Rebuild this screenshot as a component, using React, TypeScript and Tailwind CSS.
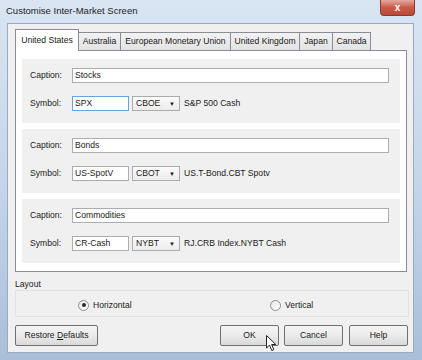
import type React from 'react';

const tabs = [
  { label: 'United States', w: 'w-[64px]' },
  { label: 'Australia', w: 'w-[42px]' },
  { label: 'European Monetary Union', w: 'w-[110px]' },
  { label: 'United Kingdom', w: 'w-[69px]' },
  { label: 'Japan', w: 'w-[33px]' },
  { label: 'Canada', w: 'w-[38px]' },
];

const groups = [
  { caption: 'Stocks', symbol: 'SPX', exchange: 'CBOE', desc: 'S&P 500 Cash', focused: true },
  { caption: 'Bonds', symbol: 'US-SpotV', exchange: 'CBOT', desc: 'US.T-Bond.CBT Spotv', focused: false },
  { caption: 'Commodities', symbol: 'CR-Cash', exchange: 'NYBT', desc: 'RJ.CRB Index.NYBT Cash', focused: false },
];

export default function App() {
  return (
    <div
      className="relative flex h-[360px] w-[422px] flex-col overflow-hidden bg-gradient-to-b from-[#d9e5f3] via-[#c5d6ea] to-[#a9bfd9] text-[8.6px] text-[#1a1a1a]"
      style={{ fontFamily: '"Liberation Sans", Arial, sans-serif' }}
    >
      <div className="flex h-[23px] items-center pl-[6px] text-[9.5px] text-[#1e1e1e]">Customise Inter-Market Screen</div>
      <div className="absolute left-[380px] top-0 flex h-[16px] w-[35px] items-center justify-center rounded-b-[4px] border border-t-0 border-[#8a3a30] bg-gradient-to-b from-[#e3aa9e] via-[#c95a46] to-[#b9493a]">
        <span className="text-[10px] font-bold leading-none text-white">x</span>
      </div>

      <div className="mx-[7px] mb-[7px] flex h-[330px] w-[407px] flex-col border border-[#9aabc0] bg-[#f0f0f0] pl-[7px] pr-[7px] pt-[5px]">
        <div className="flex h-[21px] items-end">
          {tabs.map((t, i) =>
            i === 0 ? (
              <div
                key={t.label}
                className={`relative z-10 -mb-px flex h-[22px] items-center justify-center border border-b-0 border-[#898c95] bg-white ${t.w}`}
              >
                {t.label}
              </div>
            ) : (
              <div
                key={t.label}
                className={`flex h-[18px] items-center justify-center border border-b-0 border-l-0 border-[#898c95] bg-gradient-to-b from-[#f2f2f2] to-[#e3e3e3] ${t.w}`}
              >
                {t.label}
              </div>
            ),
          )}
        </div>

        <div className="flex h-[222px] w-[392px] flex-col gap-[6px] border border-[#898c95] bg-white px-[6px] py-[8px]">
          {groups.map((g) => (
            <Group key={g.caption} {...g} />
          ))}
        </div>

        <div className="mt-[6px] h-[12px] leading-[12px]">Layout</div>
        <div className="flex h-[27px] w-[394px] items-center border border-[#e2e2e2] pt-[4px]">
          <div className="flex w-[254px] items-center gap-[4px] pl-[62px]">
            <Radio checked />
            <span>Horizontal</span>
          </div>
          <div className="flex flex-1 items-center gap-[4px]">
            <Radio />
            <span>Vertical</span>
          </div>
        </div>

        <div className="mt-[8px] flex h-[21px] w-[393px]">
          <Button className="w-[83px]">
            <span>
              Restore <span className="underline">D</span>efaults
            </span>
          </Button>
          <div className="flex-1" />
          <Button className="w-[59px] border-[#3c3c3c]">OK</Button>
          <Button className="ml-[5px] w-[59px]">Cancel</Button>
          <Button className="ml-[6px] w-[59px]">Help</Button>
        </div>
      </div>

      <svg className="absolute left-[266px] top-[335px]" width="11" height="17" viewBox="0 0 11 17">
        <path d="M0.5 0.5 L0.5 13 L3.5 10.2 L5.8 15.5 L7.8 14.6 L5.6 9.5 L9.8 9.5 Z" fill="#fff" stroke="#222" strokeWidth="1" />
      </svg>
    </div>
  );
}

function Group({ caption, symbol, exchange, desc, focused }: { caption: string; symbol: string; exchange: string; desc: string; focused: boolean }) {
  return (
    <section className="flex h-[64px] flex-col bg-[#f0f0f0] pb-[12px] pl-[8px] pr-[11px] pt-[9px]">
      <div className="flex h-[15px] items-center">
        <span className="w-[42px]">Caption:</span>
        <div className="flex h-[15px] flex-1 items-center border border-[#abadb3] bg-white px-[2px]">{caption}</div>
      </div>
      <div className="mt-[13px] flex h-[15px] items-center">
        <span className="w-[42px]">Symbol:</span>
        <div className={`flex h-[15px] w-[57px] items-center border bg-white px-[2px] ${focused ? 'border-[#6ba3d8]' : 'border-[#abadb3]'}`}>
          {symbol}
        </div>
        <div className="ml-[3px] flex h-[15px] w-[48px] items-center justify-between border border-[#acacac] bg-gradient-to-b from-[#fbfbfb] to-[#ececec] pl-[3px] pr-[4px]">
          <span>{exchange}</span>
          <span className="text-[6px] leading-none">▼</span>
        </div>
        <span className="ml-[4px]">{desc}</span>
      </div>
    </section>
  );
}

function Radio({ checked }: { checked?: boolean }) {
  return (
    <span className="flex h-[11px] w-[11px] items-center justify-center rounded-full border border-[#8e8f8f] bg-gradient-to-br from-[#e6e6e6] to-white">
      {checked && <span className="h-[4px] w-[4px] rounded-full bg-[#2a2a2a]" />}
    </span>
  );
}

function Button({ className, children }: { className?: string; children: React.ReactNode }) {
  return (
    <div
      className={`flex h-[21px] items-center justify-center rounded-[2px] border border-[#707070] bg-gradient-to-b from-[#f4f4f4] via-[#ebebeb] to-[#d9d9d9] ${className ?? ''}`}
    >
      {children}
    </div>
  );
}
